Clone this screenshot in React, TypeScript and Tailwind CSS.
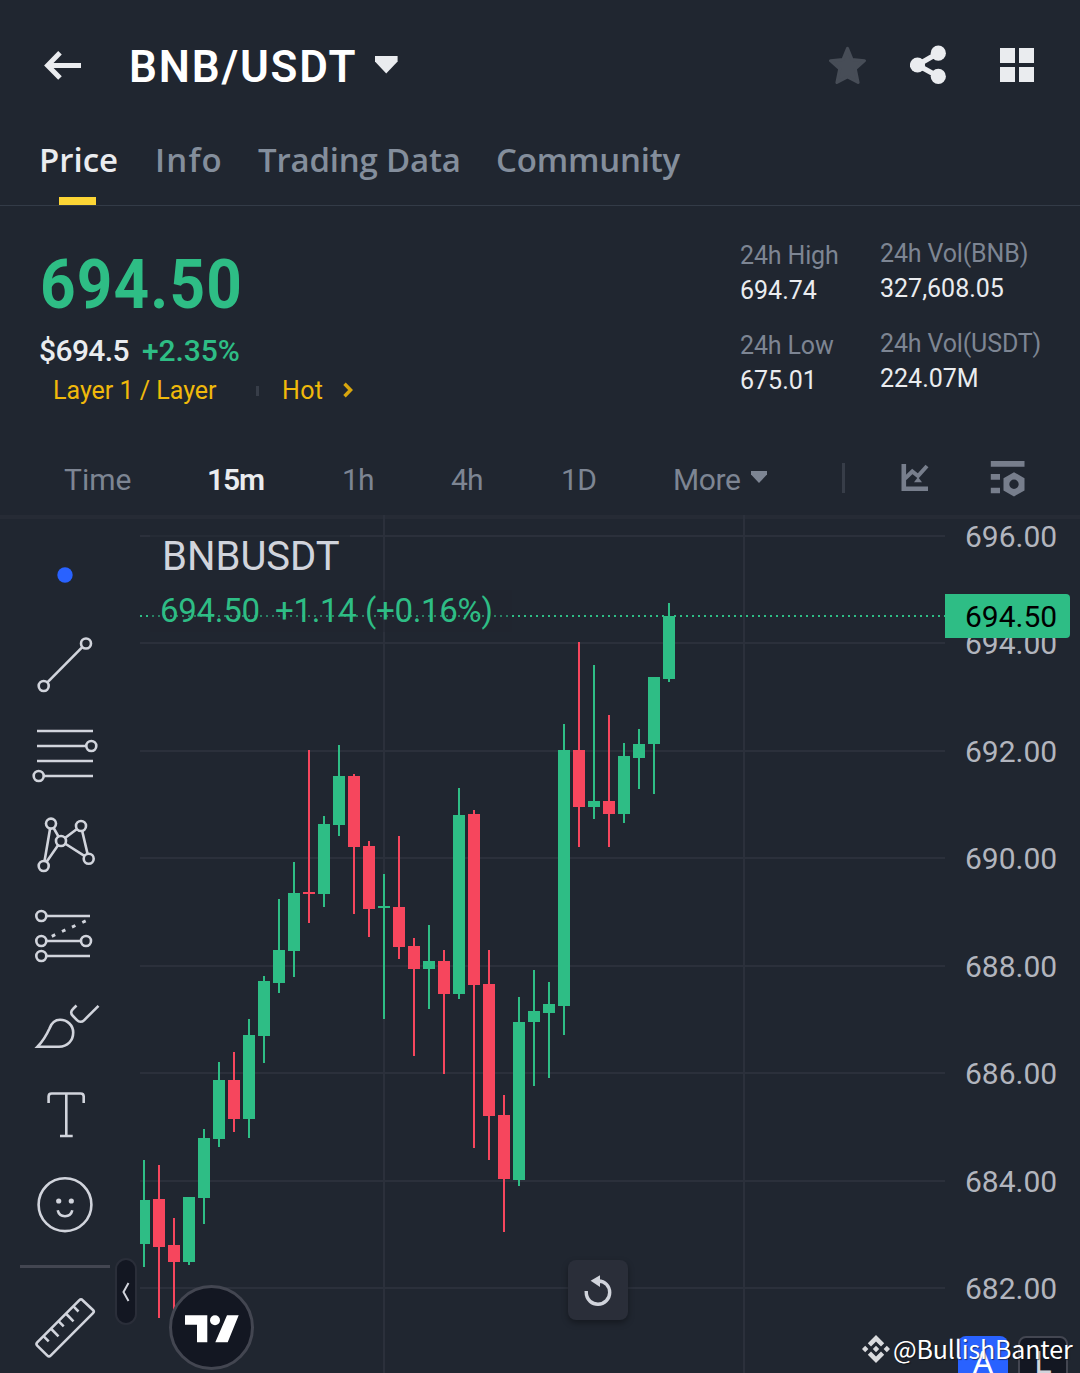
import type { ReactNode } from 'react'

type Candle = { high: number; top: number; bottom: number; low: number; up: boolean }

const UP = '#2ebd85'
const DOWN = '#f6465d'

const TABS = [
  { label: 'Price', cls: 'w-[116px] text-[#eaecef] tracking-[0px]' },
  { label: 'Info', cls: 'w-[103px] text-[#848e9c] tracking-[1.2px]' },
  { label: 'Trading Data', cls: 'w-[238px] text-[#848e9c] tracking-[-0.2px]' },
  { label: 'Community', cls: 'text-[#848e9c] tracking-[-0.2px]' },
]

const STATS_LEFT = [
  { label: '24h High', value: '694.74' },
  { label: '24h Low', value: '675.01' },
]

const STATS_RIGHT = [
  { label: '24h Vol(BNB)', value: '327,608.05' },
  { label: '24h Vol(USDT)', value: '224.07M' },
]

const INTERVALS = [
  { label: 'Time', cls: 'w-[143px] text-[#7d8593]' },
  { label: '15m', cls: 'w-[135px] text-[#eaecef] font-semibold tracking-[-1.2px]' },
  { label: '1h', cls: 'w-[109px] text-[#7d8593] tracking-[-0.8px]' },
  { label: '4h', cls: 'w-[110px] text-[#7d8593] tracking-[-0.8px]' },
  { label: '1D', cls: 'w-[112px] text-[#7d8593] tracking-[-0.5px]' },
]

const PRICES = ['696.00', '694.00', '692.00', '690.00', '688.00', '686.00', '684.00', '682.00']
const GRID_Y = [536, 643, 751, 858, 966, 1073, 1181, 1288]

// pixel levels, one candle every 15px
const CANDLES: Candle[] = [
  { high: 1160, top: 1200, bottom: 1244, low: 1267, up: true },
  { high: 1165, top: 1199, bottom: 1247, low: 1318, up: false },
  { high: 1218, top: 1245, bottom: 1262, low: 1310, up: false },
  { high: 1197, top: 1197, bottom: 1262, low: 1265, up: true },
  { high: 1129, top: 1138, bottom: 1198, low: 1224, up: true },
  { high: 1062, top: 1080, bottom: 1139, low: 1147, up: true },
  { high: 1052, top: 1080, bottom: 1119, low: 1132, up: false },
  { high: 1019, top: 1035, bottom: 1119, low: 1138, up: true },
  { high: 976, top: 981, bottom: 1036, low: 1063, up: true },
  { high: 899, top: 950, bottom: 983, low: 993, up: true },
  { high: 862, top: 893, bottom: 951, low: 977, up: true },
  { high: 750, top: 892, bottom: 894, low: 923, up: false },
  { high: 816, top: 824, bottom: 894, low: 907, up: true },
  { high: 745, top: 776, bottom: 825, low: 836, up: true },
  { high: 774, top: 776, bottom: 847, low: 914, up: false },
  { high: 841, top: 846, bottom: 909, low: 937, up: false },
  { high: 874, top: 906, bottom: 908, low: 1019, up: true },
  { high: 836, top: 907, bottom: 947, low: 959, up: false },
  { high: 938, top: 946, bottom: 969, low: 1056, up: false },
  { high: 925, top: 961, bottom: 969, low: 1009, up: true },
  { high: 950, top: 961, bottom: 994, low: 1074, up: false },
  { high: 788, top: 815, bottom: 994, low: 999, up: true },
  { high: 810, top: 814, bottom: 985, low: 1148, up: false },
  { high: 950, top: 984, bottom: 1116, low: 1160, up: false },
  { high: 1095, top: 1115, bottom: 1179, low: 1232, up: false },
  { high: 997, top: 1022, bottom: 1180, low: 1186, up: true },
  { high: 970, top: 1011, bottom: 1022, low: 1086, up: true },
  { high: 982, top: 1004, bottom: 1013, low: 1078, up: true },
  { high: 724, top: 750, bottom: 1006, low: 1035, up: true },
  { high: 642, top: 750, bottom: 807, low: 847, up: false },
  { high: 665, top: 801, bottom: 807, low: 819, up: true },
  { high: 715, top: 801, bottom: 814, low: 847, up: false },
  { high: 743, top: 756, bottom: 814, low: 823, up: true },
  { high: 729, top: 744, bottom: 758, low: 789, up: true },
  { high: 677, top: 677, bottom: 744, low: 794, up: true },
  { high: 603, top: 616, bottom: 679, low: 682, up: true },
]

function Header() {
  return (
    <header className="h-[132px] flex items-center pl-[43px]">
      <svg width="38" height="30" viewBox="0 0 38 30" fill="none" stroke="#eaecef" strokeWidth="5" className="shrink-0 -mt-[2px]">
        <path d="M5 15.4H38" />
        <path d="M17 2.7L4.6 15.4L17 28.1" />
      </svg>
      <h1 className="ml-[48px] w-[246px] text-[44px] leading-none font-semibold text-white tracking-[1.8px] whitespace-nowrap mt-px">
        BNB/USDT
      </h1>
      <svg width="23" height="18" viewBox="0 0 23 18" fill="#eaecef" className="shrink-0 -mt-[3px]">
        <path d="M0 0H22.6V5.6L11.2 17.4L0 5.6Z" />
      </svg>
      <svg width="38" height="39" viewBox="0 0 38 39" fill="#474d57" stroke="#474d57" strokeWidth="3" strokeLinejoin="round" className="ml-auto shrink-0 -mt-px">
        <path d="M18.5 2.3L23.1 13.6L35.5 14.7L26.3 22.9L29.1 36.5L18.5 31L7.9 36.5L10.7 22.9L1.5 14.7L13.9 13.6Z" />
      </svg>
      <svg width="37" height="40" viewBox="0 0 37 40" fill="#eaecef" className="ml-[43px] shrink-0 -mt-[2px]">
        <path d="M7.5 20L28.3 8M7.5 20L28.3 31.5" stroke="#eaecef" strokeWidth="5.4" />
        <circle cx="7.5" cy="20" r="7.6" />
        <circle cx="28.3" cy="8.2" r="7.6" />
        <circle cx="28.3" cy="31.4" r="7.6" />
      </svg>
      <div className="ml-[53px] mr-[46px] grid grid-cols-2 gap-1 shrink-0 -mt-[2px]">
        <span className="size-[15px] bg-[#eaecef]" />
        <span className="size-[15px] bg-[#eaecef]" />
        <span className="size-[15px] bg-[#eaecef]" />
        <span className="size-[15px] bg-[#eaecef]" />
      </div>
    </header>
  )
}

function Tabs() {
  return (
    <nav className="h-[74px] border-b border-[#333b47] pl-[39px] flex font-['Open_Sans',sans-serif] text-[33px] leading-[56px] font-semibold whitespace-nowrap">
      {TABS.map((t, i) => (
        <div key={t.label} className={`relative shrink-0 ${t.cls}`}>
          {t.label}
          {i === 0 && <span className="absolute left-[20px] bottom-0 w-[37px] h-2 bg-[#fcd535]" />}
        </div>
      ))}
    </nav>
  )
}

function StatColumn({ items, className }: { items: { label: string; value: string }[]; className: string }) {
  return (
    <div className={`flex flex-col whitespace-nowrap text-[25px] leading-[35px] ${className}`}>
      {items.map(s => (
        <div key={s.label} className="h-[90px]">
          <div className="text-[#7d8593] tracking-[-0.15px]">{s.label}</div>
          <div className="text-[#eaecef]">{s.value}</div>
        </div>
      ))}
    </div>
  )
}

function Summary() {
  return (
    <section className="h-[234px] flex">
      <div className="w-[740px] pl-[39px] pt-[39px] whitespace-nowrap">
        <div className="origin-left scale-x-[0.9] pl-px text-[69px] leading-[80px] font-bold text-[#2ebd85] tracking-[1.3px]">694.50</div>
        <div className="mt-[7px] flex text-[30px] leading-[38px] font-medium">
          <span className="w-[103px] text-[#eaecef] tracking-[-0.6px]">$694.5</span>
          <span className="text-[#2ebd85] tracking-[-0.1px]">+2.35%</span>
        </div>
        <div className="pl-[14px] mt-[2px] flex items-center text-[25px] leading-[38px] text-[#f0b90b]">
          <span className="w-[203px]">Layer 1 / Layer</span>
          <span className="w-[3px] h-[10px] bg-[#373d48]" />
          <span className="ml-[23px] w-[61px] tracking-[0.3px]">Hot</span>
          <svg width="10" height="16" viewBox="0 0 10 16" fill="none" stroke="#d8a60e" strokeWidth="3.4" className="-mt-[2px]">
            <path d="M1.5 1.8L7.6 8L1.5 14.2" />
          </svg>
        </div>
      </div>
      <StatColumn items={STATS_LEFT} className="w-[140px] pt-[32px]" />
      <StatColumn items={STATS_RIGHT} className="pt-[30px]" />
    </section>
  )
}

function IntervalBar() {
  return (
    <div className="h-[75px] pl-[64px] pt-[5px] flex items-center text-[30px] leading-[40px] whitespace-nowrap">
      {INTERVALS.map(t => (
        <span key={t.label} className={`shrink-0 ${t.cls}`}>{t.label}</span>
      ))}
      <span className="w-[78px] text-[#7d8593] tracking-[-0.4px]">More</span>
      <svg width="17" height="12" viewBox="0 0 17 12" fill="#7d8593" className="-mt-[6px]">
        <path d="M0 0H16V3.5L8 12L0 3.5Z" />
      </svg>
      <span className="ml-[74px] w-[3px] h-[30px] bg-[#373d48] -mt-[4px]" />
      <svg width="28" height="28" viewBox="0 0 28 28" fill="none" stroke="#777e8c" className="ml-[56px] -mt-[5px]">
        <path d="M2.8 0V24.8H27" strokeWidth="4.6" />
        <path d="M4 14.5L11.3 7.5L17 12L26 2" strokeWidth="4" />
        <path d="M17 13L21 18.2H13Z" fill="#777e8c" stroke="none" />
      </svg>
      <svg width="36" height="37" viewBox="0 0 36 37" fill="#777e8c" className="ml-[61px] -mt-[4px]">
        <path d="M0.8 1H34.5V6.7H0.8ZM0.8 14H10V19.7H0.8ZM0.8 27.7H10V33.3H0.8Z" />
        <path fillRule="evenodd" d="M24 12.2L34.5 18.2V30.4L24 36.4L13.5 30.4V18.2ZM24 19.6a4.7 4.7 0 1 0 0 9.4a4.7 4.7 0 1 0 0-9.4Z" />
      </svg>
    </div>
  )
}

function Tool({ children }: { children: ReactNode }) {
  return (
    <svg width="90" height="90" viewBox="0 0 90 90" fill="none" stroke="#d1d4dc" strokeWidth="2.6" className="shrink-0">
      {children}
    </svg>
  )
}

function Toolbar() {
  return (
    <aside className="relative w-[140px] shrink-0 pl-[20px] pt-[15px] flex flex-col">
      <Tool>
        <circle cx="45" cy="45" r="7.7" fill="#2962ff" stroke="none" />
      </Tool>
      {/* Trend line */}
      <Tool>
        <path d="M27.4 62.3L62.3 27.2" />
        <circle cx="66" cy="23.5" r="5" />
        <circle cx="23.7" cy="66" r="5" />
      </Tool>
      {/* Fib retracement */}
      <Tool>
        <path d="M17 21H73M17 36H66M17 51H73M24 66H73" />
        <circle cx="71.3" cy="36" r="5" />
        <circle cx="18.7" cy="66" r="5" />
      </Tool>
      {/* XABCD pattern */}
      <Tool>
        <path d="M31 23.3L23.7 66L41 41ZM41 41L61 26L68.7 58.7Z" />
        <g fill="#202630">
          <circle cx="31" cy="23.6" r="5" />
          <circle cx="61" cy="26" r="5" />
          <circle cx="41" cy="41" r="5" />
          <circle cx="23.7" cy="66" r="5" />
          <circle cx="68.7" cy="58.7" r="5" />
        </g>
      </Tool>
      {/* Forecast */}
      <Tool>
        <path d="M26.5 26H70M26.5 51H61M26.5 66H70" />
        <path d="M31.8 46.3L35.2 44.7M42 41.5L45.4 39.9M52 37.1L55.4 35.5M62.3 32.5L65.7 30.9" strokeWidth="3" />
        <circle cx="21.3" cy="26" r="5" />
        <circle cx="21.3" cy="51" r="5" />
        <circle cx="66" cy="51" r="5" />
        <circle cx="21.3" cy="66" r="5" />
      </Tool>
      {/* Brush */}
      <Tool>
        <path d="M17.5 66.7C24 60 27 54 29.5 48.5C31.5 43 35 39.8 40 39.8C47.5 39.8 53.2 45.5 53.2 52.5C53.2 60.5 47.5 66.7 39 66.7Z" />
        <path d="M56.5 25.5L53 29C50.7 31 50.7 33.5 52.5 35.5L57 40.2C59 42.3 62 42.3 64 40.3L78.5 25.8" />
      </Tool>
      {/* Text */}
      <Tool>
        <path d="M28.6 33V26.5Q28.6 23.5 31.6 23.5H60.6Q63.7 23.5 63.7 26.5V33M46.3 23.5V66M40 66H52.7" />
      </Tool>
      {/* Emoji */}
      <Tool>
        <circle cx="45" cy="44.7" r="26.4" />
        <circle cx="38.7" cy="41" r="2.6" fill="#d1d4dc" stroke="none" />
        <circle cx="51.3" cy="41" r="2.6" fill="#d1d4dc" stroke="none" />
        <path d="M37.7 50.3C39.5 58.2 50.5 58.2 52.3 50.3" />
      </Tool>
      <div className="mt-[15px] w-[90px] h-[3px] bg-[#434651]" />
      {/* Ruler */}
      <div className="mt-[15px]">
        <Tool>
          <path d="M59.4 17.2Q61 15.6 62.6 17.2L73 27Q74.6 28.6 73 30.2L30.6 72.6Q29 74.2 27.4 72.6L17.2 62.6Q15.6 61 17.2 59.4Z" />
          <path d="M23.7 53.3L28.7 58.3M31.3 46L38.5 53.3M38.7 38.3L43.7 43.3M46.3 31L53.5 38.3M53.7 23.7L58.5 28.5" />
        </Tool>
      </div>
      <button className="absolute left-[115px] top-[743px] w-[22px] h-[67px] rounded-full border-2 border-[#2a2e39] bg-[#131722] flex items-center justify-center">
        <svg width="8" height="20" viewBox="0 0 8 20" fill="none" stroke="#d1d4dc" strokeWidth="2" className="shrink-0">
          <path d="M6.5 1L1.5 10L6.5 19" />
        </svg>
      </button>
    </aside>
  )
}

function CandleChart() {
  return (
    <svg width="805" height="858" viewBox="140 515 805 858" shapeRendering="crispEdges" className="block">
      <g fill="#2b303b">
        {GRID_Y.map(y => <rect key={y} x="140" y={y - 1} width="805" height="2" />)}
        <rect x="383" y="515" width="2" height="858" />
        <rect x="743" y="515" width="2" height="858" />
      </g>
      <path d="M140 616H945" stroke={UP} strokeWidth="2" strokeDasharray="2 4" />
      {CANDLES.map((c, i) => {
        const x = 144 + i * 15
        return (
          <g key={x} fill={c.up ? UP : DOWN}>
            <rect x={x - 1} y={c.high} width="2" height={c.low - c.high} />
            <rect x={x - 6} y={c.top} width="12" height={c.bottom - c.top} />
          </g>
        )
      })}
    </svg>
  )
}

function Legend() {
  return (
    <div className="absolute left-[10px] top-[16px] flex flex-col items-start whitespace-nowrap">
      <div className="w-[200px] h-[50px] pl-[12px] bg-[#202630]/50 text-[40px] leading-[52px] text-[#d1d4dc]">BNBUSDT</div>
      <div className="mt-[9px] w-[362px] h-[42px] pl-[10px] bg-[#202630]/40 text-[33px] leading-[42px] tracking-[-0.3px] text-[#2ebd85] flex">
        <span className="w-[115px]">694.50</span>
        <span className="w-[90px]">+1.14</span>
        <span>(+0.16%)</span>
      </div>
    </div>
  )
}

function PriceAxis() {
  return (
    <div className="relative flex-1 pl-[20px] flex flex-col gap-[63.43px] text-[30px] leading-[44px] text-[#b2b5be]">
      {PRICES.map(p => <span key={p} className="h-[44px] shrink-0">{p}</span>)}
      <div className="absolute left-0 top-[79px] w-[125px] h-[44px] pl-[20px] rounded-r bg-[#2ebd85] text-black leading-[45px]">694.50</div>
      <div className="absolute left-[13px] top-[821px] w-[50px] h-[50px] rounded-lg bg-[#2962ff] text-white text-[32px] leading-[53px] text-center">A</div>
      <div className="absolute left-[73px] top-[821px] w-[50px] h-[50px] rounded-lg border-2 border-[#434651] bg-[#131722] text-[#d1d4dc] text-[32px] leading-[49px] text-center">L</div>
    </div>
  )
}

function Watermark() {
  return (
    <div className="absolute left-[862px] top-[1330px] h-[38px] flex items-center whitespace-nowrap">
      <svg width="28" height="28" viewBox="0 0 28 28" fill="#d9dadd" className="shrink-0">
        <path d="M14 0L22.2 8.2L19 11.4L14 6.4L9 11.4L5.8 8.2ZM14 28L22.2 19.8L19 16.6L14 21.6L9 16.6L5.8 19.8ZM14 10.8L17.2 14L14 17.2L10.8 14ZM3.2 10.8L6.4 14L3.2 17.2L0 14ZM24.8 10.8L28 14L24.8 17.2L21.6 14Z" />
      </svg>
      <span className="ml-[3px] -mt-[3px] font-['Noto_Sans_CJK_SC',sans-serif] text-[25px] leading-[38px] tracking-[-0.15px] text-white [text-shadow:1px_1px_1px_rgba(0,0,0,0.5)]">
        @BullishBanter
      </span>
    </div>
  )
}

export default function App() {
  return (
    <div className="relative w-[1080px] h-[1373px] overflow-hidden bg-[#202630] font-[Roboto,sans-serif]">
      <Header />
      <Tabs />
      <Summary />
      <IntervalBar />
      <div className="h-1 bg-[#262b35]" />
      <main className="relative -mt-1 h-[858px] flex">
        <Toolbar />
        <div className="relative w-[805px] shrink-0">
          <CandleChart />
          <Legend />
          {/* TradingView badge */}
          <div className="absolute left-[29px] top-[770px] size-[85px] rounded-full border-3 border-[#434651] bg-[#131722]">
            <svg width="85" height="85" viewBox="0 0 85 85" fill="#fff" className="-m-[3px]">
              <path d="M16 30.3H38.3V57.3H28V39.7H16ZM58 30.3H69.7L58.7 57.3H46.3Z" />
              <circle cx="46" cy="35.3" r="5" />
            </svg>
          </div>
          <button className="absolute left-[428px] top-[745px] size-[60px] rounded-lg bg-[#2a2e39] shadow-[0_3px_6px_rgba(0,0,0,0.35)]">
            <svg width="60" height="60" viewBox="0 0 60 60" fill="none">
              <path d="M18.2 31C18 41 25 44.2 30 44.2C36.5 44.2 41.7 39 41.7 32.5C41.7 26 37 21.2 30.5 21" stroke="#d1d4dc" strokeWidth="3.4" />
              <path d="M22.6 20.7L32 15.3V27Z" fill="#d1d4dc" />
            </svg>
          </button>
        </div>
        <PriceAxis />
      </main>
      <Watermark />
    </div>
  )
}
